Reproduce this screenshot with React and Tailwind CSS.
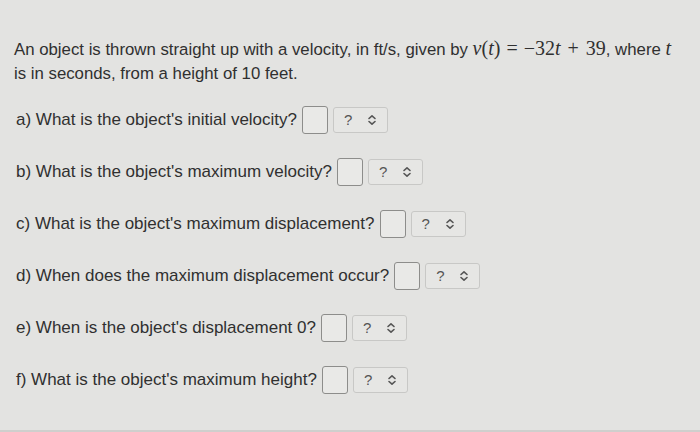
import React from 'react';

const questions = [
  "a) What is the object's initial velocity?",
  "b) What is the object's maximum velocity?",
  "c) What is the object's maximum displacement?",
  'd) When does the maximum displacement occur?',
  "e) When is the object's displacement 0?",
  "f) What is the object's maximum height?",
];

const serif = { fontFamily: '"Liberation Serif", "Times New Roman", serif' };

function UpDown() {
  return (
    <svg width="10" height="12" viewBox="0 0 10 12" fill="none" stroke="#555" strokeWidth="1.6" strokeLinecap="round" strokeLinejoin="round">
      <path d="M2 4.5 L5 1.8 L8 4.5" />
      <path d="M2 7.5 L5 10.2 L8 7.5" />
    </svg>
  );
}

function Answer() {
  return (
    <div className="flex items-center gap-[5px] ml-[5px]">
      <div className="w-[26px] h-[28px] rounded-[3px] border border-[#8d8d8b] bg-[#e9e9e7]" />
      <div className="w-[55px] h-[26px] rounded-[3px] border border-[#c8c8c6] bg-[#e6e6e4] flex items-center justify-between pl-[10px] pr-[10px]">
        <span className="text-[15px] text-[#555]">?</span>
        <UpDown />
      </div>
    </div>
  );
}

export default function App() {
  return (
    <div
      className="w-[700px] h-[432px] bg-[#e3e3e1] text-[#303030] border-b-2 border-[#cfcfcd] overflow-hidden"
      style={{ fontFamily: '"Liberation Sans", Arial, sans-serif' }}
    >
      <div className="pt-[36px] pl-[14px] text-[16.8px] leading-[24px]">
        <div className="flex items-baseline whitespace-pre">
          <span>An object is thrown straight up with a velocity, in ft/s, given by </span>
          <span className="text-[20px] leading-[24px]" style={serif}>
            <i>v</i>(<i>t</i>)<span className="mx-[6px]">=</span>−32<i>t</i><span className="mx-[7px]">+</span>39
          </span>
          <span>, where </span>
          <i className="text-[20px] leading-[24px]" style={serif}>t</i>
        </div>
        <div>is in seconds, from a height of 10 feet.</div>
      </div>
      <div className="flex flex-col gap-[24px] mt-[20px] pl-[16px]">
        {questions.map((q) => (
          <div key={q} className="flex items-center h-[28px] text-[17px]">
            <span>{q}</span>
            <Answer />
          </div>
        ))}
      </div>
    </div>
  );
}
